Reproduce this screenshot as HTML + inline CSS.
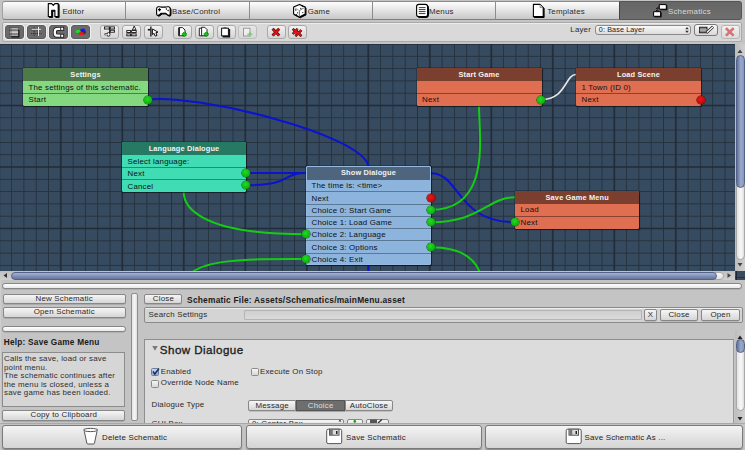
<!DOCTYPE html>
<html><head><meta charset="utf-8"><style>
*{margin:0;padding:0;box-sizing:border-box}
html,body{width:745px;height:450px;overflow:hidden;background:#c4c4c4;font-family:"Liberation Sans",sans-serif;color:#222}
.a{position:absolute}
.t{position:absolute;white-space:nowrap;line-height:1.117;}
.btn{position:absolute;background:linear-gradient(#f6f6f6,#d6d6d6);border:1px solid #878787;border-radius:2px;box-shadow:0 0.5px 0.5px rgba(0,0,0,.25)}
.tb{position:absolute;top:25px;width:19px;height:14px;border-radius:3px;background:linear-gradient(#f2f2f2,#d4d4d4);border:1px solid #a8a8a8}
.tb.on{background:#6b6b6b;border:1px solid #5c5c5c;box-shadow:0 0 0 1px #f0f0f0}
.node{position:absolute;width:125px;box-shadow:0 0 0 .5px rgba(10,16,24,.5),0.8px 0.8px 1px rgba(0,0,0,.5);border-radius:1.5px}
.sep{position:absolute;left:0;width:100%;height:1px}
.pin{position:absolute;width:8px;height:8px;border-radius:50%;background:radial-gradient(circle at 45% 40%,#22dd22,#0cb00c 70%);box-shadow:0 0 0 0.6px #0a5a0a}
.pin.red{background:radial-gradient(circle at 45% 40%,#e81818,#c00808 70%);box-shadow:0 0 0 0.6px #600}
.vthumb{position:absolute;border-radius:5px;background:linear-gradient(90deg,#5f709a,#9aaac8 55%,#8696bb);border:1px solid #52628a}
.hthumb{position:absolute;border-radius:5px;background:linear-gradient(#a6b4d0,#8090b4 55%,#64749c);border:1px solid #52628a}
.slim{position:absolute;border-radius:3px;background:linear-gradient(#ffffff,#e8e8e8);border:1px solid #858585;box-shadow:0 .5px .5px rgba(0,0,0,.2)}
.chk{position:absolute;width:8px;height:8px;background:linear-gradient(#f6f6f6,#d6d6d6);border:1px solid #8a8a8a;border-radius:1.5px}
.bbtn{position:absolute;background:linear-gradient(#f4f4f4,#d4d4d4);border:1px solid #7a7a7a;border-radius:3px;box-shadow:0 1px 1px rgba(0,0,0,.3)}
</style></head><body>
<div class="a" style="left:2px;top:1px;width:122.6px;height:19.2px;background:linear-gradient(#fefefe,#c8c8c8);border-top:1px solid #8a8a8a;border-bottom:1px solid #808080;border-left:1px solid #a2a2a2;border-radius:3px 0 0 3px;"></div>
<div class="t" style="left:62.4px;top:7.89px;font-size:7.9px;font-weight:normal;color:#2a2a2a;letter-spacing:0.2px;">Editor</div>
<div class="a" style="left:124.6px;top:1px;width:124.1px;height:19.2px;background:linear-gradient(#fefefe,#c8c8c8);border-top:1px solid #8a8a8a;border-bottom:1px solid #808080;border-left:1px solid #8c8c8c;"></div>
<div class="t" style="left:172.1px;top:7.89px;font-size:7.9px;font-weight:normal;color:#2a2a2a;letter-spacing:0.2px;">Base/Control</div>
<div class="a" style="left:248.7px;top:1px;width:123.30000000000001px;height:19.2px;background:linear-gradient(#fefefe,#c8c8c8);border-top:1px solid #8a8a8a;border-bottom:1px solid #808080;border-left:1px solid #8c8c8c;"></div>
<div class="t" style="left:307.7px;top:7.89px;font-size:7.9px;font-weight:normal;color:#2a2a2a;letter-spacing:0.2px;">Game</div>
<div class="a" style="left:372px;top:1px;width:123.19999999999999px;height:19.2px;background:linear-gradient(#fefefe,#c8c8c8);border-top:1px solid #8a8a8a;border-bottom:1px solid #808080;border-left:1px solid #8c8c8c;"></div>
<div class="t" style="left:429px;top:7.89px;font-size:7.9px;font-weight:normal;color:#2a2a2a;letter-spacing:0.2px;">Menus</div>
<div class="a" style="left:495.2px;top:1px;width:123.50000000000006px;height:19.2px;background:linear-gradient(#fefefe,#c8c8c8);border-top:1px solid #8a8a8a;border-bottom:1px solid #808080;border-left:1px solid #8c8c8c;"></div>
<div class="t" style="left:547.2px;top:7.89px;font-size:7.9px;font-weight:normal;color:#2a2a2a;letter-spacing:0.2px;">Templates</div>
<div class="a" style="left:618.7px;top:1px;width:123.3px;height:19.2px;background:linear-gradient(#666,#6e6e6e);border:1px solid #555;border-left:1px solid #444;border-radius:0 3px 3px 0"></div>
<div class="t" style="left:668px;top:7.89px;font-size:7.9px;font-weight:normal;color:#d8d8d8;letter-spacing:0.2px;">Schematics</div>
<div class="a" style="left:2px;top:22.3px;width:740px;height:19.3px;background:#d9d9d9;border:1px solid #a9a9a9;border-radius:2px;box-shadow:inset 0 1px 0 #ececec"></div>
<div class="tb on" style="left:5px"></div>
<div class="tb on" style="left:27px"></div>
<div class="tb on" style="left:49px"></div>
<div class="tb on" style="left:71px"></div>
<div class="tb" style="left:100px;opacity:1"></div>
<div class="tb" style="left:122px;opacity:1"></div>
<div class="tb" style="left:144px;opacity:1"></div>
<div class="tb" style="left:173px;opacity:1"></div>
<div class="tb" style="left:195px;opacity:1"></div>
<div class="tb" style="left:216.5px;opacity:1"></div>
<div class="tb" style="left:238px;opacity:0.55"></div>
<div class="tb" style="left:267px;opacity:1"></div>
<div class="tb" style="left:288px;opacity:1"></div>
<div class="t" style="left:570.3px;top:26.09px;font-size:7.9px;font-weight:normal;color:#2a2a2a;letter-spacing:0.2px;">Layer</div>
<div class="a" style="left:595.2px;top:24.8px;width:96px;height:9.8px;background:linear-gradient(#f8f8f8,#dcdcdc);border:1px solid #8a8a8a;border-radius:3px"></div>
<div class="t" style="left:598.8px;top:26.48px;font-size:7.2px;font-weight:normal;color:#1a1a1a;letter-spacing:0.12px;">0: Base Layer</div>
<svg class="a" style="left:684px;top:26px" width="6" height="8"><path d="M1.2 3.2L3 1L4.8 3.2ZM1.2 4.8L3 7L4.8 4.8Z" fill="#333"/></svg>
<div class="a" style="left:694.3px;top:24.3px;width:23.4px;height:11.4px;background:linear-gradient(#f8f8f8,#d8d8d8);border:1px solid #7a7a7a;border-radius:3px"></div>
<div class="a" style="left:720.8px;top:25.3px;width:19.4px;height:13.5px;background:linear-gradient(#f2f2f2,#dadada);border:1px solid #b6b6b6;border-radius:3px"></div>
<svg class="a" style="left:0;top:44px" width="735" height="227">
<defs>
<pattern id="g" x="-6.85" y="-6.15" width="12.3" height="12.3" patternUnits="userSpaceOnUse">
<path d="M0 6.15H12.3M6.15 0V12.3" stroke="#25313e" stroke-width="1.0" fill="none"/>
</pattern>
<pattern id="G" x="-31.45" y="-30.75" width="61.5" height="61.5" patternUnits="userSpaceOnUse">
<path d="M0 30.75H61.5M30.75 0V61.5" stroke="#1e2733" stroke-width="1.2" fill="none"/>
</pattern>
</defs>
<rect width="735" height="227" fill="#374b60"/>
<rect width="735" height="227" fill="url(#g)"/>
<rect width="735" height="227" fill="url(#G)"/>
</svg>

<svg class="a" style="left:0;top:0" width="745" height="45" viewBox="0 0 745 45">
<defs></defs>
<g stroke="#000" stroke-linejoin="round">
<g transform="translate(.9 .9)" fill="#000" stroke-width="1"><path d="M48.3 3.6H51.7L53.3 5.4L54.9 3.6H58.2V16.5H54.9V10.3H51.7V16.5H48.3Z"/></g>
<g transform="translate(0 0)" fill="#fff" stroke-width="1.1"><path d="M48.3 3.6H51.7L53.3 5.4L54.9 3.6H58.2V16.5H54.9V10.3H51.7V16.5H48.3Z"/></g>
<g transform="translate(.8 .8)" fill="#000" stroke-width="1"><path d="M156.6 9C156.6 6.6 159 6.3 161 7.1H165.8C167.8 6.3 170.2 6.6 170.2 9V13.8C170.2 15.6 168.5 15.8 167 14.5L165.6 13.2H161.2L159.8 14.5C158.3 15.8 156.6 15.6 156.6 13.8Z"/></g>
<g transform="translate(0 0)" fill="#fff" stroke-width="1.1"><path d="M156.6 9C156.6 6.6 159 6.3 161 7.1H165.8C167.8 6.3 170.2 6.6 170.2 9V13.8C170.2 15.6 168.5 15.8 167 14.5L165.6 13.2H161.2L159.8 14.5C158.3 15.8 156.6 15.6 156.6 13.8Z"/></g>
<path fill="none" stroke-width="1.2" d="M158 9.7H161M159.5 8.2V11.2"/>
<circle cx="166.4" cy="9.1" r=".75" fill="#000" stroke="none"/><circle cx="168.1" cy="10.5" r=".75" fill="#000" stroke="none"/>
<g transform="translate(.8 .8)" fill="#000" stroke-width="1"><path d="M299.4 4.4L305.2 7.1V14.1L299.4 17L293.6 14.1V7.1Z"/></g>
<g transform="translate(0 0)" fill="#fff" stroke-width="1.1"><path d="M299.4 4.4L305.2 7.1V14.1L299.4 17L293.6 14.1V7.1Z"/></g>
<path fill="none" stroke-width=".8" stroke="#555" d="M299.4 10.6V17M299.4 10.6L305.2 7.1"/>
<path fill="none" stroke-width=".7" stroke="#888" d="M299.4 10.6L293.6 7.1"/>
<g fill="#000" stroke="none"><circle cx="295.8" cy="10" r=".65"/><circle cx="297.6" cy="12.8" r=".65"/><circle cx="296.6" cy="14.6" r=".55"/><circle cx="302.4" cy="6.2" r=".7"/><circle cx="300.8" cy="8.4" r=".55"/><circle cx="302.8" cy="12.6" r=".55"/></g>
<g transform="translate(.9 .9)" fill="#000" stroke-width="1"><rect x="416.6" y="4.4" width="11" height="12.2" rx="2.2"/></g>
<g transform="translate(0 0)" fill="#fff" stroke-width="1.1"><rect x="416.6" y="4.4" width="11" height="12.2" rx="2.2"/></g>
<path fill="none" stroke="#222" stroke-width=".9" d="M418.8 7.6H425.5M418.8 9.6H425.5M418.8 11.6H425.5M418.8 13.6H425.5"/>
<g transform="translate(.9 .9)" fill="#000" stroke-width="1"><path d="M533.4 4.4H540L543.2 7.6V16.6H533.4Z"/></g>
<g transform="translate(0 0)" fill="#fff" stroke-width="1.1"><path d="M533.4 4.4H540L543.2 7.6V16.6H533.4Z"/></g>
<path d="M540 4.6V7.6H543" fill="#ccc" stroke="#666" stroke-width=".6"/>
<!-- schematics -->
<path fill="none" stroke="#000" stroke-width="1.6" d="M659.6 7Q655.6 8.6 657 10.6Q658.4 12 661 12.6"/>
<path fill="none" stroke="#fff" stroke-width=".6" stroke-dasharray=".9 .9" d="M659.6 7Q655.6 8.6 657 10.6Q658.4 12 661 12.6"/>
<rect x="660.3" y="5.4" width="7" height="4.8" fill="#000" stroke="none"/>
<rect x="659.3" y="4.6" width="7" height="4.6" fill="#fff" stroke-width="1"/>
<rect x="654.6" y="12.5" width="7" height="4.8" fill="#000" stroke="none"/>
<rect x="653.6" y="11.7" width="7" height="4.6" fill="#fff" stroke-width="1"/>
</g>
</svg>


<svg class="a" style="left:0;top:0" width="745" height="45" viewBox="0 0 745 45">
<!-- tb1 list -->
<rect x="9.5" y="27.5" width="9" height="9" fill="#8c8c8c" stroke="#3a3a3a" stroke-width=".6"/>
<rect x="9.8" y="27.9" width="8.4" height="1.5" fill="#b4b4b4"/>
<rect x="9.8" y="29.6" width="8.4" height="1.5" fill="#767676"/>
<rect x="9.8" y="31.3" width="8.4" height="1.8" fill="#cdcdcd"/>
<rect x="9.8" y="33.3" width="8.4" height="1.5" fill="#828282"/>
<rect x="9.8" y="35" width="8.4" height="1.3" fill="#aaaaaa"/>
<rect x="9.8" y="27.9" width="2.2" height="8.4" fill="#000" opacity=".18"/>
<path d="M11.2 36.9H18.9V30" stroke="#111" stroke-width="1.1" fill="none"/>
<!-- tb2 grid -->
<path d="M34.2 26.8V36.4M31.2 33.6H41.8" stroke="#111" stroke-width="1" stroke-dasharray="1 1" opacity=".75"/>
<path d="M31.8 29.3H41.2M38.6 26.8V36" stroke="#111" stroke-width="2" opacity=".5"/>
<path d="M31.8 29.3H41.2M38.6 26.8V36" stroke="#f4f4f4" stroke-width="1.1"/>
<!-- tb3 magnet -->
<path d="M60.6 28.8H57.6Q54.8 28.8 54.8 31.6V32.9Q54.8 35.7 57.6 35.7H60.6" fill="none" stroke="#111" stroke-width="3.8"/>
<path d="M60.6 28.8H57.6Q54.8 28.8 54.8 31.6V32.9Q54.8 35.7 57.6 35.7H60.6" fill="none" stroke="#fff" stroke-width="2.3"/>
<rect x="60.8" y="27.2" width="2.9" height="3.1" fill="#fff" stroke="#111" stroke-width=".8"/>
<rect x="60.8" y="34.2" width="2.9" height="3.1" fill="#fff" stroke="#111" stroke-width=".8"/>
<!-- tb4 rgb -->
<ellipse cx="82.3" cy="32.2" rx="3.6" ry="2.4" fill="#222" opacity=".7"/>
<ellipse cx="82.8" cy="30.3" rx="2.6" ry="1.7" fill="#1818f0"/>
<ellipse cx="78.2" cy="31.4" rx="2.6" ry="1.7" fill="#18e018"/>
<ellipse cx="81.2" cy="33.6" rx="2.6" ry="1.7" fill="#f01818"/>
<!-- tb5 -->
<g fill="#fff" stroke="#111" stroke-width=".9">
<rect x="104.4" y="26.9" width="4.9" height="2.1"/><rect x="110.1" y="26.9" width="4.3" height="2.1"/><rect x="110.1" y="30.2" width="4.3" height="2"/>
</g>
<path d="M109.7 26.8V33.2" stroke="#111" stroke-width="1"/>
<path d="M104.6 34.3H110.4M108.5 32.2V36.4" stroke="#111" stroke-width="2.1"/>
<path d="M105.2 34.3H109.9M108.5 32.8V35.8" stroke="#fff" stroke-width=".9"/>
<!-- tb6 -->
<g fill="#fff" stroke="#111" stroke-width=".9">
<rect x="126.8" y="30.6" width="3.8" height="1.9"/><rect x="126.8" y="33.9" width="3.8" height="1.9"/>
<rect x="131.6" y="30.6" width="4.6" height="1.9"/><rect x="131.6" y="33.9" width="4.6" height="1.9"/>
<path d="M134.2 26.1L136 29.9H132.4Z"/>
</g>
<!-- tb7 -->
<path d="M147.8 29.7H150.4" stroke="#111" stroke-width="1.6"/>
<path d="M150.9 26.4V36.4" stroke="#111" stroke-width="1.3"/>
<path d="M152.4 29L158 32.1L155.9 32.7L157 35.4L155.2 36.1L154.1 33.4L152.4 34.6Z" stroke="#111" stroke-width="1" fill="#fff"/>
<!-- tb8 new page + -->
<path d="M178.8 27.6H182.6L185 30V35.8H178.8Z" fill="#fff" stroke="#111" stroke-width=".9"/>
<path d="M179.2 28V35.6" stroke="#111" stroke-width="1.4"/>
<path d="M184.3 31.9V36.6M181.9 34.2H186.7" stroke="#111" stroke-width="2.6" opacity=".6"/>
<path d="M184.3 31.9V36.6M181.9 34.2H186.7" stroke="#18c018" stroke-width="1.5"/>
<!-- tb9 -->
<path d="M199.3 28.2H202.5V35.8H199.3Z" fill="#fff" stroke="#111" stroke-width=".9"/>
<path d="M201.6 27.3H204.8L207 29.5V35.8H201.6Z" fill="#fff" stroke="#111" stroke-width=".9"/>
<path d="M206.2 31.9V36.6M203.8 34.2H208.6" stroke="#111" stroke-width="2.6" opacity=".6"/>
<path d="M206.2 31.9V36.6M203.8 34.2H208.6" stroke="#18c018" stroke-width="1.5"/>
<!-- tb10 clipboard -->
<rect x="221.6" y="28.2" width="6.8" height="7.6" fill="#fff" stroke="#111" stroke-width="1"/>
<path d="M223.5 27.6H226.5" stroke="#555" stroke-width="1"/>
<path d="M229.4 29V36.8H222.6" stroke="#111" stroke-width="1.5" fill="none"/>
<!-- tb11 disabled -->
<g opacity=".5"><rect x="243.5" y="28.2" width="6.5" height="7.8" fill="#fff" stroke="#444" stroke-width=".9"/>
<path d="M249.8 31.9V36.6M247.4 34.2H252.2" stroke="#18c018" stroke-width="1.5"/></g>
<!-- tb12 red X -->
<path d="M272.6 28.8L279.2 35.6M279.2 28.8L272.6 35.6" stroke="#300" stroke-width="2.8"/>
<path d="M272.6 28.8L279.2 35.6M279.2 28.8L272.6 35.6" stroke="#e41414" stroke-width="1.7"/>
<!-- tb13 double X -->
<path d="M292.8 28.8L297.6 34M297.6 28.8L292.8 34M295.4 30.2L301.4 36.2M301.4 30.2L295.4 36.2" stroke="#300" stroke-width="2.5"/>
<path d="M292.8 28.8L297.6 34M297.6 28.8L292.8 34M295.4 30.2L301.4 36.2M301.4 30.2L295.4 36.2" stroke="#e41414" stroke-width="1.5"/>
<!-- edit btn icon -->
<rect x="699.6" y="27.2" width="7.4" height="5.6" fill="#8a8a8a" stroke="#111" stroke-width=".9"/>
<path d="M699.6 30H707" stroke="#ccc" stroke-width=".8"/>
<path d="M706.5 32.8L713 26.8" stroke="#111" stroke-width="2.8"/>
<path d="M706.8 32.4L712.8 26.9" stroke="#fff" stroke-width="1.4"/>
<!-- red x faded -->
<path d="M726 28.2L733.6 35.6M733.6 28.2L726 35.6" stroke="#9a5050" stroke-width="2.6" opacity=".6"/>
<path d="M726 28.2L733.6 35.6M733.6 28.2L726 35.6" stroke="#e07070" stroke-width="1.8"/>
</svg>

<svg class="a" style="left:0;top:0" width="735" height="271" viewBox="0 0 735 271">
<g fill="none" stroke-width="2" stroke-linecap="butt">
<path stroke="#0b12d0" d="M148 99.5C195.6 93.6 360.9 133.7 368.5 166"/>
<path stroke="#0b12d0" d="M246.2 173.1L305.5 173.1"/>
<path stroke="#0b12d0" d="M246.2 185.2C293.6 185.2 280.8 173.1 305.5 173.1"/>
<path stroke="#0b12d0" d="M431.0 173.2C460.2 173.2 456.2 222.2 514.7 222.2"/>
<path stroke="#0b12d0" d="M368.5 265L368.5 275"/>
<path stroke="#e6e6e6" stroke-width="1.6" d="M541.2 99.5C566.5 99.5 564.9 74.5 576.0 74.5"/>
<path stroke="#14cc14" d="M430.8 209.8C491.8 209.8 479.0 136.6 479.0 106.0"/>
<path stroke="#14cc14" d="M430.8 222.2C480.9 222.2 487.6 197.3 515.0 197.3"/>
<path stroke="#14cc14" d="M183.7 192.0C183.7 204.3 195.2 234.3 305.9 234.3"/>
<path stroke="#14cc14" d="M430.6 247.2C492 247.2 482 295 482 295"/>
<path stroke="#14cc14" d="M305.9 259.1C232.5 259.1 178 257 178 300"/>
</g></svg>
<div class="node" style="left:23px;top:68px;width:125px;height:37.90px;background:#84d87f">
<div class="a" style="left:0;top:0;width:125px;height:13px;background:#4d7a48;border-radius:1.5px 1.5px 0 0"></div>
<div class="sep" style="top:24.95px;background:#4a804a"></div>
</div>
<div class="t" style="left:-64.5px;width:300px;text-align:center;top:70.90px;font-size:7.4px;font-weight:bold;color:#f2f2f2;letter-spacing:0.15px;">Settings</div>
<div class="t" style="left:28.5px;top:83.69px;font-size:7.9px;font-weight:normal;color:#101010;letter-spacing:0.2px;">The settings of this schematic.</div>
<div class="t" style="left:28.5px;top:96.14px;font-size:7.9px;font-weight:normal;color:#101010;letter-spacing:0.2px;">Start</div>
<div class="node" style="left:122px;top:142px;width:124px;height:50.35px;background:#40dcb4">
<div class="a" style="left:0;top:0;width:124px;height:13px;background:#267a64;border-radius:1.5px 1.5px 0 0"></div>
<div class="sep" style="top:24.95px;background:#2a8a70"></div>
<div class="sep" style="top:37.40px;background:#2a8a70"></div>
</div>
<div class="t" style="left:34.0px;width:300px;text-align:center;top:144.90px;font-size:7.4px;font-weight:bold;color:#f2f2f2;letter-spacing:0.15px;">Language Dialogue</div>
<div class="t" style="left:127.5px;top:157.69px;font-size:7.9px;font-weight:normal;color:#101010;letter-spacing:0.2px;">Select language:</div>
<div class="t" style="left:127.5px;top:170.14px;font-size:7.9px;font-weight:normal;color:#101010;letter-spacing:0.2px;">Next</div>
<div class="t" style="left:127.5px;top:182.59px;font-size:7.9px;font-weight:normal;color:#101010;letter-spacing:0.2px;">Cancel</div>
<div class="node" style="left:306px;top:166.2px;width:125px;height:99.29px;background:#8db4dc">
<div class="a" style="left:0;top:0;width:125px;height:99.29px;border:1px solid #98bade;border-radius:2px"></div>
<div class="a" style="left:1px;top:1px;width:123px;height:12.4px;background:#4f657e;border-radius:1px 1px 0 0"></div>
<div class="sep" style="top:25.17px;background:#5b7894"></div>
<div class="sep" style="top:37.44px;background:#5b7894"></div>
<div class="sep" style="top:49.71px;background:#5b7894"></div>
<div class="sep" style="top:61.98px;background:#5b7894"></div>
<div class="sep" style="top:74.25px;background:#5b7894"></div>
<div class="sep" style="top:86.52px;background:#5b7894"></div>
</div>
<div class="t" style="left:218.5px;width:300px;text-align:center;top:169.10px;font-size:7.4px;font-weight:bold;color:#f2f2f2;letter-spacing:0.15px;">Show Dialogue</div>
<div class="t" style="left:311.5px;top:182.29px;font-size:7.9px;font-weight:normal;color:#101010;letter-spacing:0.2px;">The time is: &lt;time&gt;</div>
<div class="t" style="left:311.5px;top:194.56px;font-size:7.9px;font-weight:normal;color:#101010;letter-spacing:0.2px;">Next</div>
<div class="t" style="left:311.5px;top:206.83px;font-size:7.9px;font-weight:normal;color:#101010;letter-spacing:0.2px;">Choice 0: Start Game</div>
<div class="t" style="left:311.5px;top:219.10px;font-size:7.9px;font-weight:normal;color:#101010;letter-spacing:0.2px;">Choice 1: Load Game</div>
<div class="t" style="left:311.5px;top:231.37px;font-size:7.9px;font-weight:normal;color:#101010;letter-spacing:0.2px;">Choice 2: Language</div>
<div class="t" style="left:311.5px;top:243.64px;font-size:7.9px;font-weight:normal;color:#101010;letter-spacing:0.2px;">Choice 3: Options</div>
<div class="t" style="left:311.5px;top:255.91px;font-size:7.9px;font-weight:normal;color:#101010;letter-spacing:0.2px;">Choice 4: Exit</div>
<div class="node" style="left:416.5px;top:67.7px;width:125px;height:38.30px;background:#e06f52">
<div class="a" style="left:0;top:0;width:125px;height:13.2px;background:#7b3f2f;border-radius:1.5px 1.5px 0 0"></div>
<div class="sep" style="top:25.25px;background:#8b4030"></div>
</div>
<div class="t" style="left:329.0px;width:300px;text-align:center;top:70.60px;font-size:7.4px;font-weight:bold;color:#f2f2f2;letter-spacing:0.15px;">Start Game</div>
<div class="t" style="left:422.0px;top:83.59px;font-size:7.9px;font-weight:normal;color:#101010;letter-spacing:0.2px;"></div>
<div class="t" style="left:422.0px;top:96.14px;font-size:7.9px;font-weight:normal;color:#101010;letter-spacing:0.2px;">Next</div>
<div class="node" style="left:576px;top:67.7px;width:125px;height:38.30px;background:#e06f52">
<div class="a" style="left:0;top:0;width:125px;height:13.2px;background:#7b3f2f;border-radius:1.5px 1.5px 0 0"></div>
<div class="sep" style="top:25.25px;background:#8b4030"></div>
</div>
<div class="t" style="left:488.5px;width:300px;text-align:center;top:70.60px;font-size:7.4px;font-weight:bold;color:#f2f2f2;letter-spacing:0.15px;">Load Scene</div>
<div class="t" style="left:581.5px;top:83.59px;font-size:7.9px;font-weight:normal;color:#101010;letter-spacing:0.2px;">1 Town (ID 0)</div>
<div class="t" style="left:581.5px;top:96.14px;font-size:7.9px;font-weight:normal;color:#101010;letter-spacing:0.2px;">Next</div>
<div class="node" style="left:515px;top:190.7px;width:124.4px;height:38.30px;background:#e06f52">
<div class="a" style="left:0;top:0;width:124.4px;height:13.1px;background:#7b3f2f;border-radius:1.5px 1.5px 0 0"></div>
<div class="sep" style="top:25.20px;background:#8b4030"></div>
</div>
<div class="t" style="left:427.20000000000005px;width:300px;text-align:center;top:193.60px;font-size:7.4px;font-weight:bold;color:#f2f2f2;letter-spacing:0.15px;">Save Game Menu</div>
<div class="t" style="left:520.5px;top:206.49px;font-size:7.9px;font-weight:normal;color:#101010;letter-spacing:0.2px;">Load</div>
<div class="t" style="left:520.5px;top:219.09px;font-size:7.9px;font-weight:normal;color:#101010;letter-spacing:0.2px;">Next</div>
<div class="pin" style="left:144.0px;top:95.5px"></div>
<div class="pin" style="left:242.2px;top:169.1px"></div>
<div class="pin" style="left:242.2px;top:181.2px"></div>
<div class="pin red" style="left:426.8px;top:193.6px"></div>
<div class="pin" style="left:426.8px;top:205.8px"></div>
<div class="pin" style="left:426.8px;top:218.2px"></div>
<div class="pin" style="left:301.9px;top:230.3px"></div>
<div class="pin" style="left:426.6px;top:243.2px"></div>
<div class="pin" style="left:301.9px;top:255.1px"></div>
<div class="pin" style="left:537.2px;top:95.5px"></div>
<div class="pin red" style="left:697.0px;top:95.5px"></div>
<div class="pin" style="left:510.7px;top:218.2px"></div>
<div class="a" style="left:735px;top:44px;width:10px;height:227px;background:linear-gradient(90deg,#bdbdbd,#cfcfcf)"></div>
<svg class="a" style="left:735px;top:44px" width="10" height="227"><path d="M2.5 9L5 5.5L7.5 9Z" fill="#444"/><path d="M2.5 219L5 222.5L7.5 219Z" fill="#444"/></svg>
<div class="a" style="left:735.5px;top:150px;width:9.5px;height:110px;border-radius:5px;background:linear-gradient(90deg,#e4e4e4,#f8f8f8 60%,#dcdcdc);border:1px solid #a8a8a8"></div>
<div class="vthumb" style="left:735.5px;top:54.5px;width:9px;height:133px"></div>
<div class="a" style="left:0px;top:270.8px;width:735px;height:9.3px;background:linear-gradient(#c0c0c0,#d0d0d0)"></div>
<svg class="a" style="left:0;top:271px" width="735" height="9"><path d="M7 2L3.5 4.5L7 7Z" fill="#333"/><path d="M727.5 2L731 4.5L727.5 7Z" fill="#444"/></svg>
<div class="a" style="left:690px;top:272px;width:34px;height:8px;border-radius:5px;background:linear-gradient(#f8f8f8,#e0e0e0);border:1px solid #a8a8a8"></div>
<div class="hthumb" style="left:10.7px;top:272.2px;width:706px;height:7.5px"></div>
<div class="a" style="left:735px;top:271px;width:10px;height:9.3px;background:#384b5f"></div>
<div class="a" style="left:735px;top:277px;width:10px;height:1px;background:#25313e"></div>
<div class="a" style="left:735.5px;top:271px;width:1px;height:9.3px;background:#1e2733"></div>
<div class="a" style="left:0px;top:280px;width:1.4px;height:170px;background:#cecece"></div>
<div class="slim" style="left:2.3px;top:282.5px;width:739.7px;height:6px"></div>
<div class="btn" style="left:2.5px;top:293.7px;width:123.5px;height:10.7px;"></div>
<div class="t" style="left:-85.75px;width:300px;text-align:center;top:295.09px;font-size:7.9px;font-weight:normal;color:#2a2a2a;letter-spacing:0.2px;">New Schematic</div>
<div class="btn" style="left:2.5px;top:307px;width:123.5px;height:10.8px;"></div>
<div class="t" style="left:-85.75px;width:300px;text-align:center;top:308.49px;font-size:7.9px;font-weight:normal;color:#2a2a2a;letter-spacing:0.2px;">Open Schematic</div>
<div class="slim" style="left:2.3px;top:326.4px;width:123.7px;height:5.8px"></div>
<div class="t" style="left:3.8px;top:338.23px;font-size:8.25px;font-weight:bold;color:#1a1a1a;letter-spacing:0.23px;">Help: Save Game Menu</div>
<div class="a" style="left:2.2px;top:352.2px;width:123.3px;height:54.6px;background:#d6d6d6;border:1px solid #8c8c8c"></div>
<div class="t" style="left:4px;top:355.15px;font-size:7.9px;font-weight:normal;color:#2e2e2e;letter-spacing:0.2px;">Calls the save, load or save</div>
<div class="t" style="left:4px;top:363.70px;font-size:7.9px;font-weight:normal;color:#2e2e2e;letter-spacing:0.2px;">point menu.</div>
<div class="t" style="left:4px;top:372.25px;font-size:7.9px;font-weight:normal;color:#2e2e2e;letter-spacing:0.2px;">The schematic continues after</div>
<div class="t" style="left:4px;top:380.80px;font-size:7.9px;font-weight:normal;color:#2e2e2e;letter-spacing:0.2px;">the menu is closed, unless a</div>
<div class="t" style="left:4px;top:389.35px;font-size:7.9px;font-weight:normal;color:#2e2e2e;letter-spacing:0.2px;">save game has been loaded.</div>
<div class="btn" style="left:2.3px;top:409.5px;width:123px;height:11px;"></div>
<div class="t" style="left:-86.2px;width:300px;text-align:center;top:411.49px;font-size:7.9px;font-weight:normal;color:#2a2a2a;letter-spacing:0.2px;">Copy to Clipboard</div>
<div class="a" style="left:131.3px;top:293px;width:6.9px;height:127.7px;background:linear-gradient(90deg,#e2e2e2,#f6f6f6 50%,#e0e0e0);border:1px solid #8e8e8e;border-radius:2px"></div>
<div class="btn" style="left:144.4px;top:293.6px;width:38.1px;height:10.8px;"></div>
<div class="t" style="left:13.450000000000017px;width:300px;text-align:center;top:294.89px;font-size:7.9px;font-weight:normal;color:#2a2a2a;letter-spacing:0.2px;">Close</div>
<div class="t" style="left:187.1px;top:296.30px;font-size:8.4px;font-weight:bold;color:#1a1a1a;letter-spacing:0.22px;">Schematic File: Assets/Schematics/mainMenu.asset</div>
<div class="a" style="left:144.4px;top:307.3px;width:598.2px;height:15.3px;background:#d4d4d4;border:1px solid #8a8a8a;border-radius:2px;box-shadow:inset 0 1px 0 #eee"></div>
<div class="t" style="left:148.6px;top:311.09px;font-size:7.9px;font-weight:normal;color:#2a2a2a;letter-spacing:0.2px;">Search Settings</div>
<div class="a" style="left:244px;top:309.5px;width:397.8px;height:10.3px;background:linear-gradient(#cfcfcf,#dadada);border:1px solid #b4b4b4;border-radius:1px"></div>
<div class="btn" style="left:644.4px;top:309.2px;width:12.4px;height:11.7px;"></div>
<div class="t" style="left:500.6px;width:300px;text-align:center;top:311.49px;font-size:7.9px;font-weight:normal;color:#2a2a2a;letter-spacing:0.2px;">X</div>
<div class="btn" style="left:659.8px;top:309.2px;width:38.5px;height:11.7px;"></div>
<div class="t" style="left:529.05px;width:300px;text-align:center;top:311.49px;font-size:7.9px;font-weight:normal;color:#2a2a2a;letter-spacing:0.2px;">Close</div>
<div class="btn" style="left:701.2px;top:309.2px;width:38.5px;height:11.7px;"></div>
<div class="t" style="left:570.45px;width:300px;text-align:center;top:311.49px;font-size:7.9px;font-weight:normal;color:#2a2a2a;letter-spacing:0.2px;">Open</div>
<div class="a" style="left:144.3px;top:339.3px;width:589.3px;height:86px;background:#dcdcdc;border:1px solid #8e8e8e;border-right-color:#9a9a9a"></div>
<div class="a" style="left:735.3px;top:329.6px;width:9.7px;height:95px;background:linear-gradient(90deg,#bdbdbd,#cfcfcf)"></div>
<svg class="a" style="left:735.3px;top:329.6px" width="10" height="95"><path d="M2.5 9L5 5.5L7.5 9Z" fill="#222"/><path d="M2.5 87L5 90.5L7.5 87Z" fill="#222"/></svg>
<div class="a" style="left:735.5px;top:345px;width:9.5px;height:66px;border-radius:5px;background:linear-gradient(90deg,#e4e4e4,#f8f8f8 60%,#dcdcdc);border:1px solid #a8a8a8"></div>
<div class="vthumb" style="left:735.5px;top:339.4px;width:9px;height:13.5px"></div>
<svg class="a" style="left:150px;top:344px" width="10" height="10"><path d="M2.2 2H7.8L5 6.8Z" fill="#7a7a7a"/></svg>
<div class="t" style="left:159.8px;top:344.30px;font-size:11.6px;font-weight:normal;color:#1e1e1e;letter-spacing:0.45px;-webkit-text-stroke:0.35px #1e1e1e">Show Dialogue</div>
<div class="chk" style="left:151px;top:368px;background:linear-gradient(#c4d4f0,#8ca8dc);border-color:#6c7ca0"></div>
<svg class="a" style="left:151px;top:366px" width="10" height="10"><path d="M2 5.5L3.8 8L8 2.5" fill="none" stroke="#1a2a50" stroke-width="1.4"/></svg>
<div class="t" style="left:160.8px;top:367.99px;font-size:7.9px;font-weight:normal;color:#2a2a2a;letter-spacing:0.2px;">Enabled</div>
<div class="chk" style="left:151px;top:379.5px"></div>
<div class="t" style="left:160.8px;top:379.49px;font-size:7.9px;font-weight:normal;color:#2a2a2a;letter-spacing:0.2px;">Override Node Name</div>
<div class="chk" style="left:250.7px;top:368px"></div>
<div class="t" style="left:260px;top:367.99px;font-size:7.9px;font-weight:normal;color:#2a2a2a;letter-spacing:0.2px;">Execute On Stop</div>
<div class="t" style="left:151.5px;top:401.29px;font-size:7.9px;font-weight:normal;color:#2a2a2a;letter-spacing:0.2px;">Dialogue Type</div>
<div class="btn" style="left:248px;top:399.7px;width:48.3px;height:11.6px;border-radius:2px 0 0 2px"></div>
<div class="t" style="left:122.14999999999998px;width:300px;text-align:center;top:402.09px;font-size:7.9px;font-weight:normal;color:#2a2a2a;letter-spacing:0.2px;">Message</div>
<div class="btn" style="left:296.3px;top:399.7px;width:48.8px;height:11.6px;border-radius:0;background:#6e6e6e;border-color:#555"></div>
<div class="t" style="left:170.7px;width:300px;text-align:center;top:402.09px;font-size:7.9px;font-weight:normal;color:#dedede;letter-spacing:0.2px;">Choice</div>
<div class="btn" style="left:345.1px;top:399.7px;width:47.6px;height:11.6px;border-radius:0 2px 2px 0"></div>
<div class="t" style="left:218.90000000000003px;width:300px;text-align:center;top:402.09px;font-size:7.9px;font-weight:normal;color:#2a2a2a;letter-spacing:0.2px;">AutoClose</div>
<div class="t" style="left:151.5px;top:419.99px;font-size:7.9px;font-weight:normal;color:#2a2a2a;letter-spacing:0.2px;">GUI Box</div>
<div class="btn" style="left:248px;top:418.5px;width:96.4px;height:10px;"></div>
<div class="t" style="left:252px;top:419.99px;font-size:7.9px;font-weight:normal;color:#222;letter-spacing:0.2px;">0: Center Box</div>
<div class="btn" style="left:347px;top:418.5px;width:15.7px;height:10px;"></div>
<div class="btn" style="left:365.6px;top:418.5px;width:23px;height:10px;"></div>
<svg class="a" style="left:0;top:410px" width="400" height="14" viewBox="0 410 400 14"><path d="M338.5 421.5L340 419.6L341.5 421.5Z" fill="#333"/><circle cx="354.8" cy="421.4" r="1.3" fill="#10a010"/><rect x="370" y="419.5" width="7" height="3.5" fill="#555"/><path d="M378 423L382 419.5" stroke="#333" stroke-width="1.2"/></svg>
<div class="a" style="left:0px;top:423px;width:745px;height:27px;background:#c4c4c4"></div>
<div class="a" style="left:0px;top:422.6px;width:745px;height:0.8px;background:#a8a8a8"></div>
<div class="bbtn" style="left:1.8px;top:425.2px;width:240.7px;height:23.8px"></div>
<div class="t" style="left:102.1px;top:433.99px;font-size:7.9px;font-weight:normal;color:#1e1e1e;letter-spacing:0.2px;">Delete Schematic</div>
<div class="bbtn" style="left:245.8px;top:425.2px;width:236.2px;height:23.8px"></div>
<div class="t" style="left:346.1px;top:433.99px;font-size:7.9px;font-weight:normal;color:#1e1e1e;letter-spacing:0.2px;">Save Schematic</div>
<div class="bbtn" style="left:484.5px;top:425.2px;width:258.5px;height:23.8px"></div>
<div class="t" style="left:584.5px;top:433.99px;font-size:7.9px;font-weight:normal;color:#1e1e1e;letter-spacing:0.2px;">Save Schematic As ...</div>
<svg class="a" style="left:0;top:420px" width="745" height="30" viewBox="0 420 745 30">
<path d="M84.3 431.3L86.8 443Q87 444 88 444H93.3Q94.3 444 94.5 443L97 431.3" fill="#fff" stroke="#555" stroke-width="1"/>
<ellipse cx="90.6" cy="430" rx="7.2" ry="1.6" fill="#fff" stroke="#555" stroke-width="1"/>
<g id="fl"><rect x="326.7" y="429.2" width="15" height="14.4" rx="1.5" fill="#fff" stroke="#555" stroke-width="1"/>
<rect x="329.5" y="429.2" width="9.5" height="6" fill="#ddd" stroke="#555" stroke-width="1"/>
<rect x="329.8" y="429.6" width="3" height="5.4" fill="#777"/>
<rect x="336" y="431" width="1.5" height="3" fill="#222"/></g>
<g transform="translate(239.5 0)" ><g><rect x="326.7" y="429.2" width="15" height="14.4" rx="1.5" fill="#fff" stroke="#555" stroke-width="1"/>
<rect x="329.5" y="429.2" width="9.5" height="6" fill="#ddd" stroke="#555" stroke-width="1"/>
<rect x="329.8" y="429.6" width="3" height="5.4" fill="#777"/>
<rect x="336" y="431" width="1.5" height="3" fill="#222"/></g></g>
</svg>
</body></html>
